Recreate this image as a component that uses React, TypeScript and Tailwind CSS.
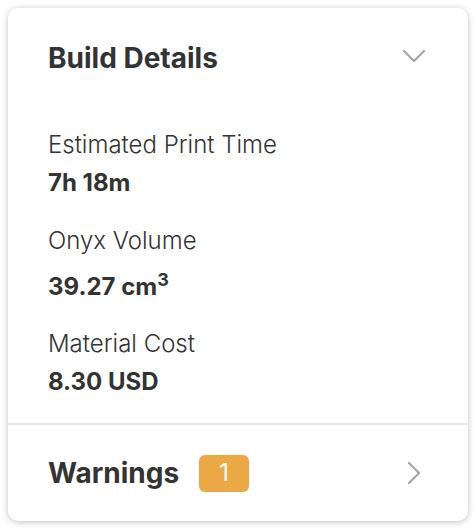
import React from "react";

function ChevronDown() {
  return (
    <svg width="24" height="14" viewBox="0 0 24 14" fill="none">
      <path d="M2 2L12 12L22 2" stroke="#a6a6a6" strokeWidth="2.2" strokeLinecap="round" strokeLinejoin="round" />
    </svg>
  );
}

function ChevronRight() {
  return (
    <svg width="16" height="24" viewBox="0 0 16 24" fill="none">
      <path d="M3 2L13 12L3 22" stroke="#a6a6a6" strokeWidth="2.2" strokeLinecap="round" strokeLinejoin="round" />
    </svg>
  );
}

export default function App() {
  return (
    <div className="w-[476px] h-[530px] bg-white p-2" style={{ fontFamily: "Inter, 'Noto Sans', sans-serif" }}>
      <div className="w-[460px] h-[513px] bg-white rounded-[10px] shadow-[0_1px_6px_rgba(0,0,0,0.25)] flex flex-col text-[#333333]">
        <div className="h-[99px] shrink-0 flex items-center justify-between pl-10 pr-[42px]">
          <h2 className="text-[28px] font-bold leading-none">Build Details</h2>
          <div className="-mt-[4px]">
            <ChevronDown />
          </div>
        </div>
        <div className="flex flex-col px-10 pt-[23px] pb-[26px]">
          <div className="text-[24px] leading-[30px] font-light">Estimated Print Time</div>
          <div className="text-[24px] leading-[30px] font-bold mt-[8px]">7h 18m</div>
          <div className="text-[24px] leading-[30px] font-light mt-[28px]">Onyx Volume</div>
          <div className="text-[24px] leading-[30px] font-bold mt-[16px]">
            39.27 cm<sup>3</sup>
          </div>
          <div className="text-[24px] leading-[30px] font-light mt-[27px]">Material Cost</div>
          <div className="text-[24px] leading-[30px] font-bold mt-[8px]">8.30 USD</div>
        </div>
        <div className="h-[2px] shrink-0 bg-[#e8e8e8]" />
        <div className="flex-1 flex items-center justify-between pl-10 pr-[46px]">
          <div className="flex items-center gap-[20px]">
            <span className="text-[28px] font-bold leading-none">Warnings</span>
            <span className="w-[50px] h-[37px] rounded-[6px] bg-[#eca844] text-white text-[24px] flex items-center justify-center">1</span>
          </div>
          <ChevronRight />
        </div>
      </div>
    </div>
  );
}
